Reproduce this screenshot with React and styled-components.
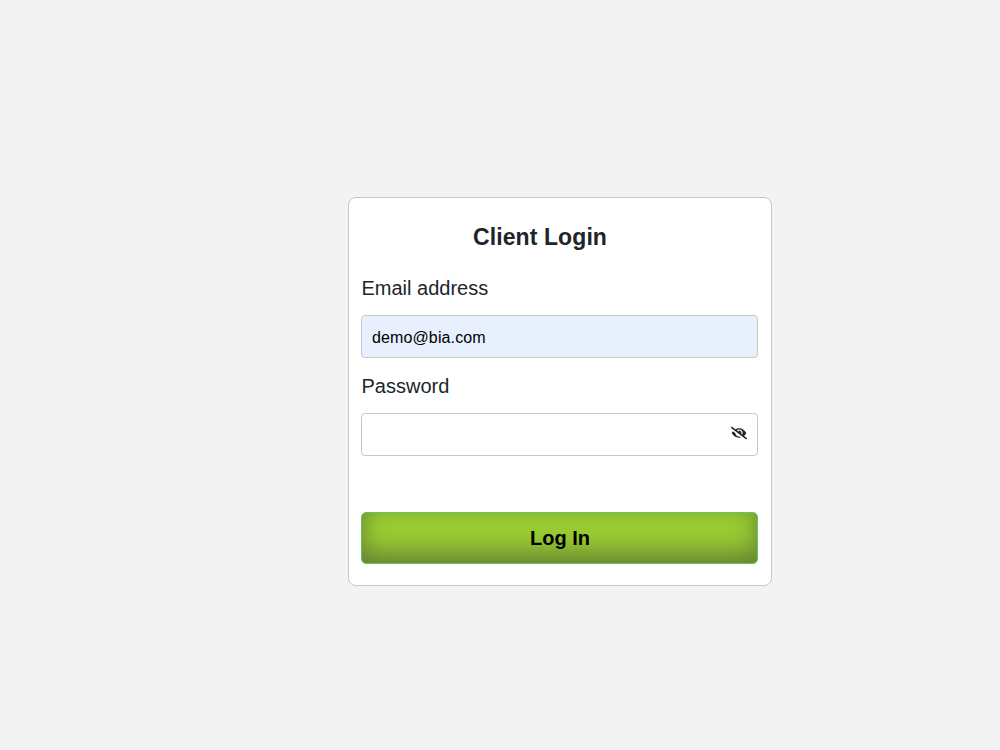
import React, { useState } from 'react'
import styled, { createGlobalStyle } from 'styled-components'
import { FaEye, FaEyeSlash } from 'react-icons/fa'

const GlobalStyle = createGlobalStyle`
* {
  box-sizing: border-box;
}

body {
  margin: 0;
  background: #f3f3f3;
  color: #212529;
  font-family: "Liberation Sans", Arial, sans-serif;
}
`

const Page = styled.main`
height: 100vh;
display: flex;
justify-content: center;
align-items: flex-start;
padding: 197px 0 0 120px;
`

const Card = styled.form`
width: 424px;
height: 389px;
display: flex;
flex-direction: column;
padding: 24px 13px 0 12px;
background: white;
border: 1px solid #c8c8c8;
border-radius: 8px;
`

const Title = styled.h1`
margin: 0;
padding-right: 39px;
font-size: 23px;
line-height: 31px;
letter-spacing: 0.1px;
text-align: center;
`

const Label = styled.label`
margin: ${(props) => props.$top} 0 12px;
padding-left: 0.5px;
font-size: 20px;
line-height: 30px;
`

const Field = styled.div`
height: 43px;
display: flex;
align-items: center;
background: ${(props) => (props.$filled ? '#e8f0fe' : 'white')};
border: 1px solid #c5c7cb;
border-radius: 4px;
`

const Input = styled.input`
flex: 1;
min-width: 0;
height: 41px;
padding: 2px 10px 0;
border: 0;
outline: none;
background: transparent;
color: black;
font-family: inherit;
font-size: 16px;
letter-spacing: 0.12px;
`

const EyeButton = styled.button`
display: flex;
margin: 0 10px 3px 0;
padding: 0;
border: 0;
background: none;
color: #212529;
cursor: pointer;
`

const SubmitButton = styled.button`
height: 52px;
margin-top: 56px;
padding: 0 0 0 1px;
background: #9acd32;
border: 1px solid #62c462;
border-radius: 5px;
box-shadow: inset 0 -10px 24px 0 rgba(60, 70, 50, 0.58);
color: black;
font-family: inherit;
font-size: 20px;
font-weight: 600;
cursor: pointer;
`

const App = () => {
  const [email, setEmail] = useState('demo@bia.com')
  const [password, setPassword] = useState('')
  const [visible, setVisible] = useState(false)

  return (
    <Page>
      <GlobalStyle />
      <Card onSubmit={(e) => e.preventDefault()}>
        <Title>Client Login</Title>

        <Label htmlFor="email" $top="20px">Email address</Label>
        <Field $filled={email !== ''}>
          <Input
            id="email"
            type="email"
            value={email}
            onChange={(e) => setEmail(e.target.value)}
          />
        </Field>

        <Label htmlFor="password" $top="13px">Password</Label>
        <Field>
          <Input
            id="password"
            type={visible ? 'text' : 'password'}
            value={password}
            onChange={(e) => setPassword(e.target.value)}
          />
          <EyeButton
            type="button"
            aria-label="Toggle password"
            onClick={() => setVisible(!visible)}
          >
            {visible ? <FaEye size={16} /> : <FaEyeSlash size={16} />}
          </EyeButton>
        </Field>

        <SubmitButton type="submit">Log In</SubmitButton>
      </Card>
    </Page>
  )
}

export default App
